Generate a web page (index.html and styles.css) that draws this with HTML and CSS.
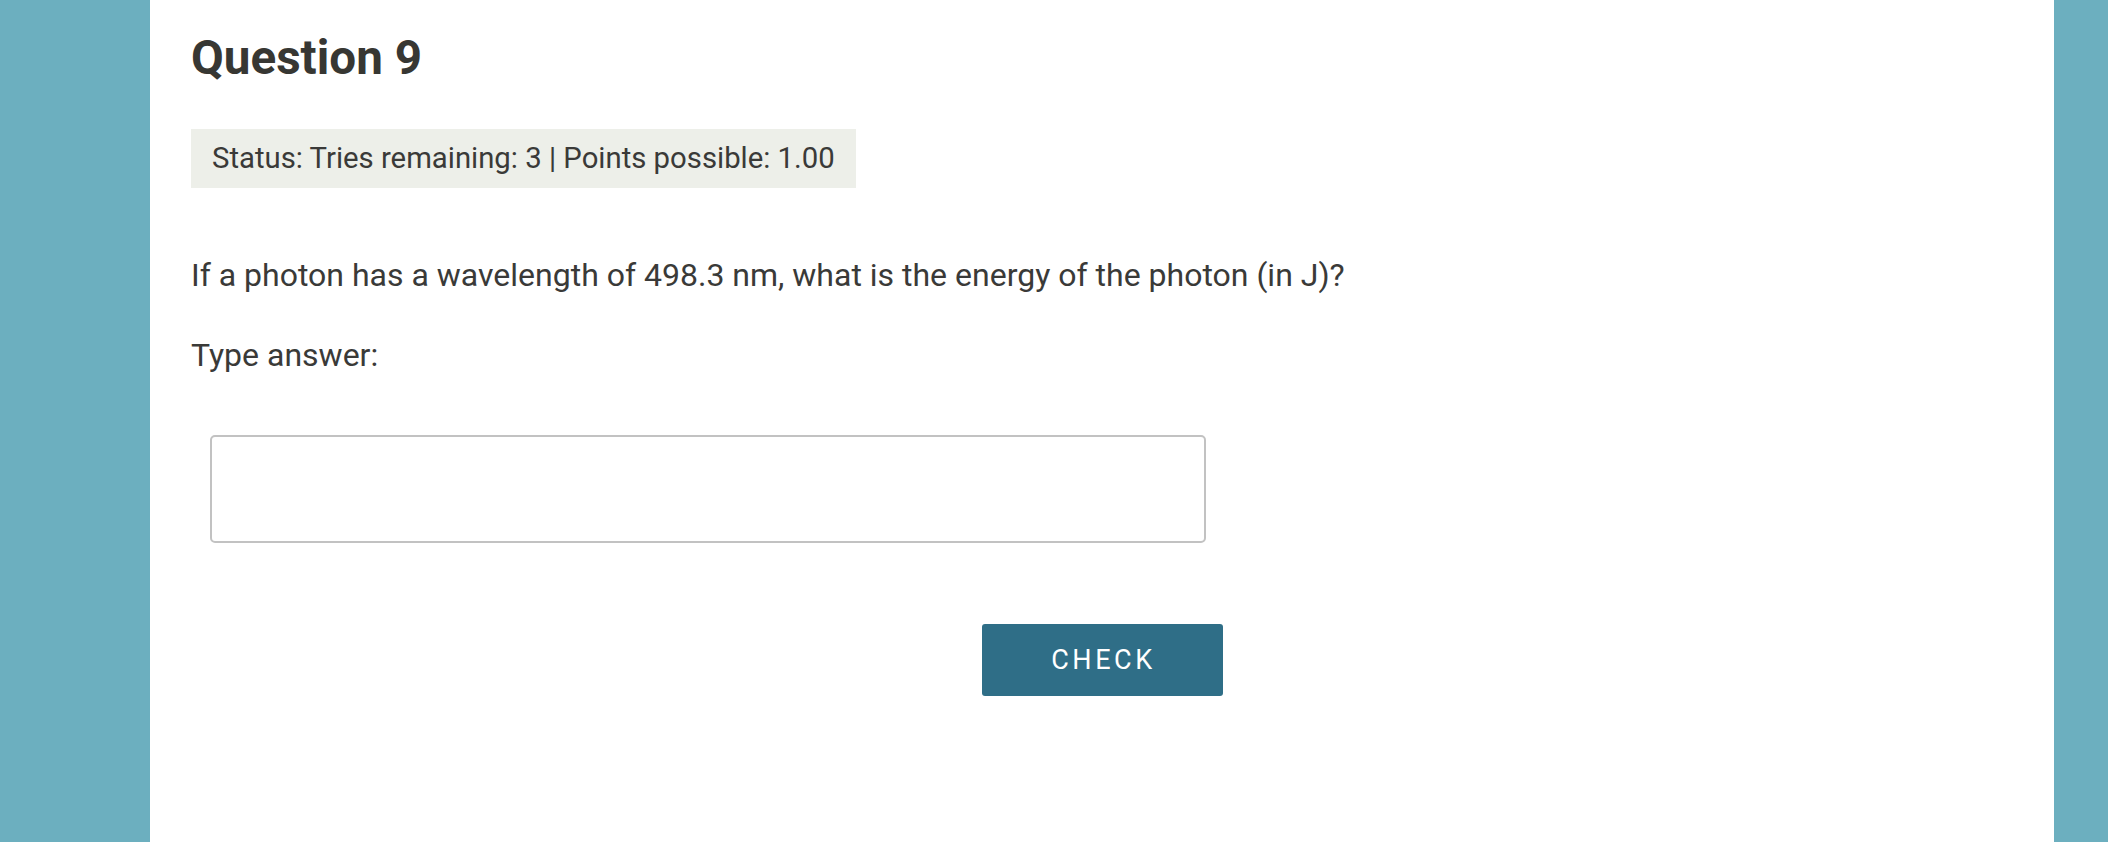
FILE: index.html
```html
<!DOCTYPE html>
<html lang="en">
  <head>
    <meta charset="UTF-8">
    <title>Question 9</title>
    <link rel="stylesheet" href="styles.css">
  </head>
  <body>
    <div id="pagina">
      <h2 class="titol">Question 9</h2>
      <div class="estat">Status: Tries remaining: 3 | Points possible: 1.00</div>
      <p class="pregunta">If a photon has a wavelength of 498.3 nm, what is the energy of the photon (in J)?</p>
      <p class="pregunta">Type answer:</p>
      <div class="resposta">
        <input type="text" class="camp">
      </div>
      <div class="accions">
        <button type="button" class="check">CHECK</button>
      </div>
    </div>
  </body>
</html>
```

FILE: styles.css
```css
  body {
    margin: 0;
    background: #6cafbf;
    font-family: Roboto, "Liberation Sans", sans-serif;
    color: #3a3a38;
  }

  #pagina {
    background: white;
    margin: 0 54px 0 150px;
    height: 842px;
    padding: 30px 41px 0 41px;
    box-sizing: border-box;
  }

  .titol {
    font-size: 47.6px;
    font-weight: 700;
    margin: 0 0 43px 0;
    line-height: 56px;
    color: #373733;
  }

  .estat {
    display: inline-block;
    background: #edefe9;
    font-size: 29.3px;
    line-height: 59px;
    padding: 0 21px;
  }

  .pregunta {
    font-size: 32px;
    line-height: 36px;
    margin: 69px 0 0 0;
  }

  .pregunta + .pregunta {
    margin-top: 44px;
  }

  .resposta {
    padding: 62px 0 0 19px;
  }

  .camp {
    width: 996px;
    height: 108px;
    box-sizing: border-box;
    border: 2px solid #c2c2c2;
    border-radius: 5px;
    font-size: 28px;
    padding: 0 16px;
    outline: none;
  }

  .accions {
    display: flex;
    justify-content: center;
    padding-top: 81px;
  }

  .check {
    width: 241px;
    height: 72px;
    background: #2f6e87;
    color: white;
    border: none;
    border-radius: 3px;
    font-family: Roboto, "Liberation Sans", sans-serif;
    font-size: 27px;
    font-weight: 400;
    letter-spacing: 3.6px;
    padding: 0 0 0 3px;
    cursor: pointer;
  }
```
